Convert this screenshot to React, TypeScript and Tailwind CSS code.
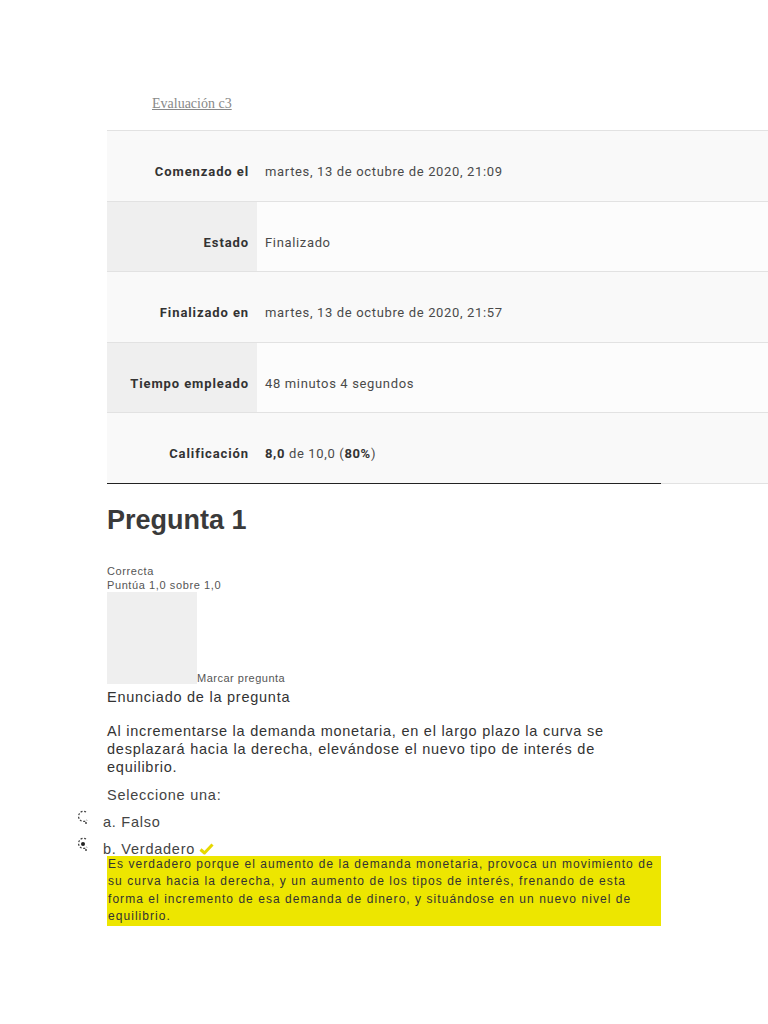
import React from 'react';

const rows: { label: string; value: React.ReactNode; shade: boolean }[] = [
  { label: 'Comenzado el', value: 'martes, 13 de octubre de 2020, 21:09', shade: false },
  { label: 'Estado', value: 'Finalizado', shade: true },
  { label: 'Finalizado en', value: 'martes, 13 de octubre de 2020, 21:57', shade: false },
  { label: 'Tiempo empleado', value: '48 minutos 4 segundos', shade: true },
  {
    label: 'Calificación',
    value: (
      <span>
        <b className="text-[#333]">8,0</b> de 10,0 (<b className="text-[#333]">80%</b>)
      </span>
    ),
    shade: false,
  },
];

function Radio({ checked }: { checked?: boolean }) {
  return (
    <svg width="14" height="16" viewBox="0 0 14 16" className="shrink-0">
      <path d="M9 3 A5 5 0 1 0 10 11" fill="none" stroke="#444" strokeWidth="1.3" strokeDasharray="2 1.5" />
      <circle cx="9" cy="14" r="0.9" fill="#333" />
      {checked ? <circle cx="6" cy="8" r="2" fill="#222" /> : null}
    </svg>
  );
}

export default function App() {
  return (
    <div className="min-h-[1024px] bg-white pt-[93px] font-['Liberation_Sans',Arial,sans-serif] text-[#333]">
      <div className="pl-[152px] font-['Liberation_Serif',serif] text-[14px] text-[#888] underline">
        Evaluación c3
      </div>

      <div className="mt-[16px] ml-[107px] border-t border-[#e2e2e2] font-['Roboto',sans-serif] text-[13px]">
        {rows.map((r) => (
          <div
            key={r.label}
            className={`flex h-[70.6px] border-b border-[#e2e2e2] ${r.shade ? 'bg-[#fcfcfc]' : 'bg-[#f9f9f9]'}`}
          >
            <div
              className={`flex w-[150px] shrink-0 items-center justify-end pt-[12px] pr-[8px] font-bold tracking-[0.9px] text-[#333] ${
                r.shade ? 'bg-[#efefef]' : ''
              }`}
            >
              {r.label}
            </div>
            <div className="flex items-center pt-[12px] pl-[8px] tracking-[0.65px] text-[#4a4a4a]">{r.value}</div>
          </div>
        ))}
      </div>

      <div className="ml-[107px] -mt-px w-[554px] border-t border-[#222]" />

      <div className="ml-[107px] w-[554px]">
        <h2 className="mt-[20px] text-[27px] leading-[32px] font-bold text-[#3a3a3a]">Pregunta 1</h2>

        <div className="mt-[28px] text-[11px] leading-[14px] tracking-[0.6px] text-[#555]">
          <div>Correcta</div>
          <div>Puntúa 1,0 sobre 1,0</div>
        </div>
        <div className="flex items-end">
          <div className="h-[92px] w-[90px] bg-[#efefef]" />
          <span className="text-[11px] leading-[12px] tracking-[0.5px] text-[#555]">Marcar pregunta</span>
        </div>

        <div className="mt-[4px] text-[14.5px] leading-[18px] tracking-[0.75px] text-[#333]">Enunciado de la pregunta</div>
        <p className="mt-[16px] text-[14.5px] leading-[18px] tracking-[0.75px] text-[#333]">
          Al incrementarse la demanda monetaria, en el largo plazo la curva se desplazará hacia la derecha,
          elevándose el nuevo tipo de interés de equilibrio.
        </p>
        <div className="mt-[10px] text-[14.5px] leading-[18px] tracking-[0.75px] text-[#444]">Seleccione una:</div>

        <div className="-ml-[30px] mt-[5px] flex items-start gap-[12px] text-[14.5px] tracking-[0.75px] text-[#444]">
          <Radio />
          <span className="mt-[4px] leading-[18px]">a. Falso</span>
        </div>
        <div className="-ml-[30px] mt-[5px] flex items-start gap-[12px] text-[14.5px] tracking-[0.75px] text-[#444]">
          <Radio checked />
          <span className="mt-[4px] flex items-center gap-[4px] leading-[18px]">
            b. Verdadero
            <svg width="15" height="12" viewBox="0 0 15 12">
              <path d="M1.5 6.5 L5.5 10 L13.5 1.5" fill="none" stroke="#e6d800" strokeWidth="3" strokeLinejoin="round" />
            </svg>
          </span>
        </div>

        <div className="mt-[-2px] bg-[#ede600] pl-[1px] text-[12px] leading-[17.5px] tracking-[1.05px] text-[#333]">
          Es verdadero porque el aumento de la demanda monetaria, provoca un movimiento de su curva hacia la derecha,
          y un aumento de los tipos de interés, frenando de esta forma el incremento de esa demanda de dinero, y
          situándose en un nuevo nivel de equilibrio.
        </div>
      </div>
    </div>
  );
}
